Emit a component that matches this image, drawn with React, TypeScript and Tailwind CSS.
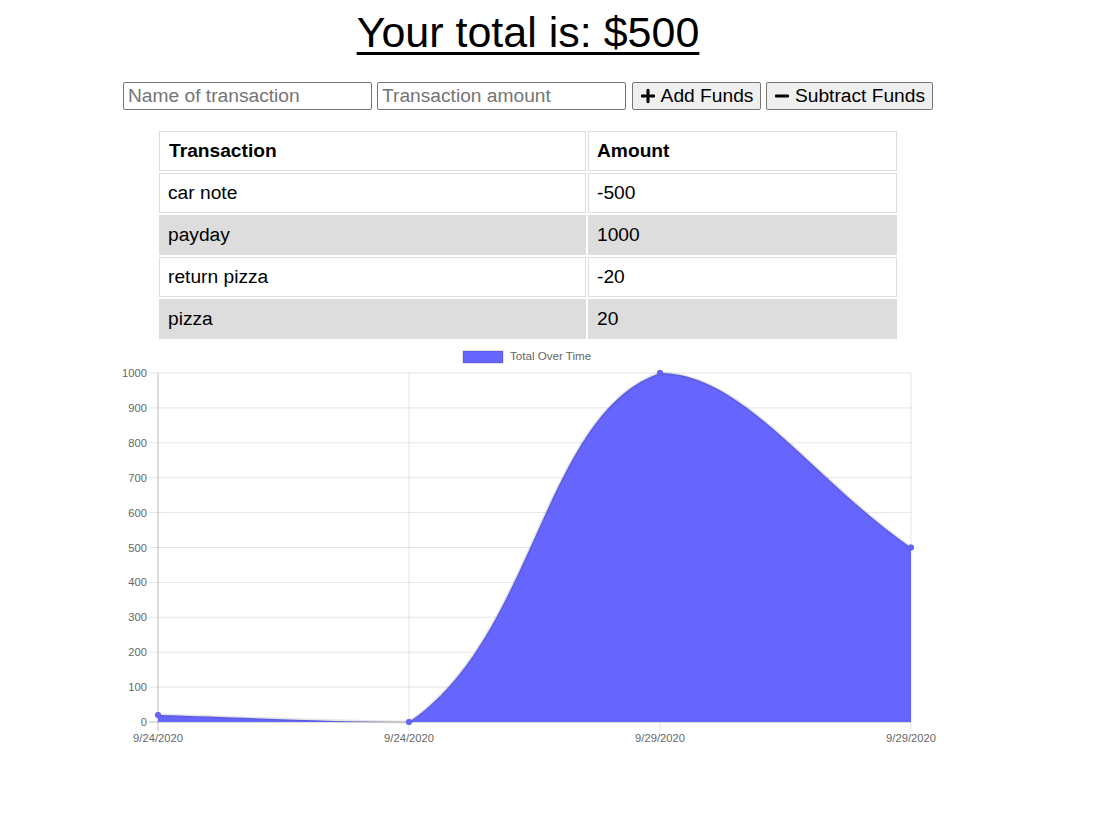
import { FaPlus, FaMinus } from 'react-icons/fa'

interface Txn {
  name: string
  value: number
}

const transactions: Txn[] = [
  { name: 'car note', value: -500 },
  { name: 'payday', value: 1000 },
  { name: 'return pizza', value: -20 },
  { name: 'pizza', value: 20 },
]

// chart area in page coordinates (svg viewBox matches the page)
const LEFT = 158
const RIGHT = 911
const TOP = 373
const BOTTOM = 722
const yFor = (v: number) => BOTTOM - ((BOTTOM - TOP) * v) / 1000

const xs = [158, 409, 660, 911]
const labels = ['9/24/2020', '9/24/2020', '9/29/2020', '9/29/2020']
const totals = [20, 0, 1000, 500]

function Chart() {
  const pts = xs.map((x, i) => [x, yFor(totals[i])])
  const curve =
    `M${pts[0][0]},${pts[0][1]} C258.4,717.8 335,722 ${pts[1][0]},${pts[1][1]} ` +
    `C535.8,635.6 542.6,413.8 ${pts[2][0]},${pts[2][1]} ` +
    `C743.4,373 810.6,477.7 ${pts[3][0]},${pts[3][1]}`
  const ticks = [0, 100, 200, 300, 400, 500, 600, 700, 800, 900, 1000]

  return (
    <svg width={836} height={410} viewBox="110 343 836 410" className="block mt-[2px]">
      {/* legend */}
      <rect x={463} y={351} width={40} height={12} fill="#6666ff" stroke="rgba(0,0,0,0.1)" strokeWidth={2} />
      <text x={510} y={360} fontSize="11.6" fill="#666" fontFamily="'Liberation Sans', Arial, sans-serif">
        Total Over Time
      </text>

      {/* horizontal grid */}
      {ticks.map((t) => (
        <line
          key={t}
          x1={149}
          x2={RIGHT}
          y1={yFor(t)}
          y2={yFor(t)}
          stroke={t === 0 ? 'rgba(0,0,0,0.25)' : 'rgba(0,0,0,0.1)'}
          strokeWidth={1}
        />
      ))}
      {/* vertical grid */}
      {xs.map((x, i) => (
        <line
          key={i}
          x1={x}
          x2={x}
          y1={TOP}
          y2={731}
          stroke={i === 0 ? 'rgba(0,0,0,0.25)' : 'rgba(0,0,0,0.1)'}
          strokeWidth={1}
        />
      ))}

      {/* y labels */}
      {ticks.map((t) => (
        <text
          key={t}
          x={147}
          y={yFor(t) + 4}
          textAnchor="end"
          fontSize="11.2"
          fill="#666"
          fontFamily="'Liberation Sans', Arial, sans-serif"
        >
          {t}
        </text>
      ))}
      {/* x labels */}
      {xs.map((x, i) => (
        <text
          key={i}
          x={x}
          y={742}
          textAnchor="middle"
          fontSize="11.2"
          fill="#666"
          fontFamily="'Liberation Sans', Arial, sans-serif"
        >
          {labels[i]}
        </text>
      ))}

      {/* area */}
      <path d={`${curve} L${RIGHT},${BOTTOM} L${LEFT},${BOTTOM} Z`} fill="#6666ff" />
      <path d={curve} fill="none" stroke="rgba(0,0,0,0.1)" strokeWidth={3} />
      {pts.map(([x, y], i) => (
        <circle key={i} cx={x} cy={y} r={3} fill="#6666ff" stroke="rgba(0,0,0,0.1)" strokeWidth={1} />
      ))}
    </svg>
  )
}

export default function App() {
  return (
    <div className="w-[1056px] bg-white flex flex-col items-center text-black font-['Liberation_Sans',Arial,sans-serif]">
      <h1 className="mt-[6px] text-[43px] leading-[52px] underline decoration-[3px] underline-offset-[5px]">
        Your total is: $500
      </h1>

      <div className="mt-[24px] flex gap-[5px] text-[19.2px]">
        <input
          type="text"
          placeholder="Name of transaction"
          className="w-[249px] h-[28px] px-[4px] border border-[#767676] rounded-[2px] placeholder:text-[#757575] outline-none"
        />
        <input
          type="number"
          placeholder="Transaction amount"
          className="w-[249px] h-[28px] px-[4px] border border-[#767676] rounded-[2px] placeholder:text-[#757575] outline-none"
        />
        <button className="ml-[1px] w-[129px] h-[28px] flex items-center justify-center gap-[5px] bg-[#efefef] border border-[#767676] rounded-[2px]">
          <FaPlus className="w-[16px] h-[16px]" />
          Add Funds
        </button>
        <button className="w-[167px] h-[28px] flex items-center justify-center gap-[5px] bg-[#efefef] border border-[#767676] rounded-[2px]">
          <FaMinus className="w-[16px] h-[16px]" />
          Subtract Funds
        </button>
      </div>

      <table className="mt-[19px] border-separate border-spacing-[2px] text-[19.2px] w-[742px]">
        <thead>
          <tr>
            <th className="w-[427px] h-[40px] border border-[#ddd] pl-[9px] text-left font-bold">Transaction</th>
            <th className="h-[40px] border border-[#ddd] pl-[8px] text-left font-bold">Amount</th>
          </tr>
        </thead>
        <tbody>
          {transactions.map((t, i) => (
            <tr key={t.name} className={i % 2 === 1 ? 'bg-[#dddddd]' : 'bg-white'}>
              <td className="h-[40px] border border-[#ddd] pl-[8px]">{t.name}</td>
              <td className="h-[40px] border border-[#ddd] pl-[8px]">{t.value}</td>
            </tr>
          ))}
        </tbody>
      </table>

      <Chart />
    </div>
  )
}
